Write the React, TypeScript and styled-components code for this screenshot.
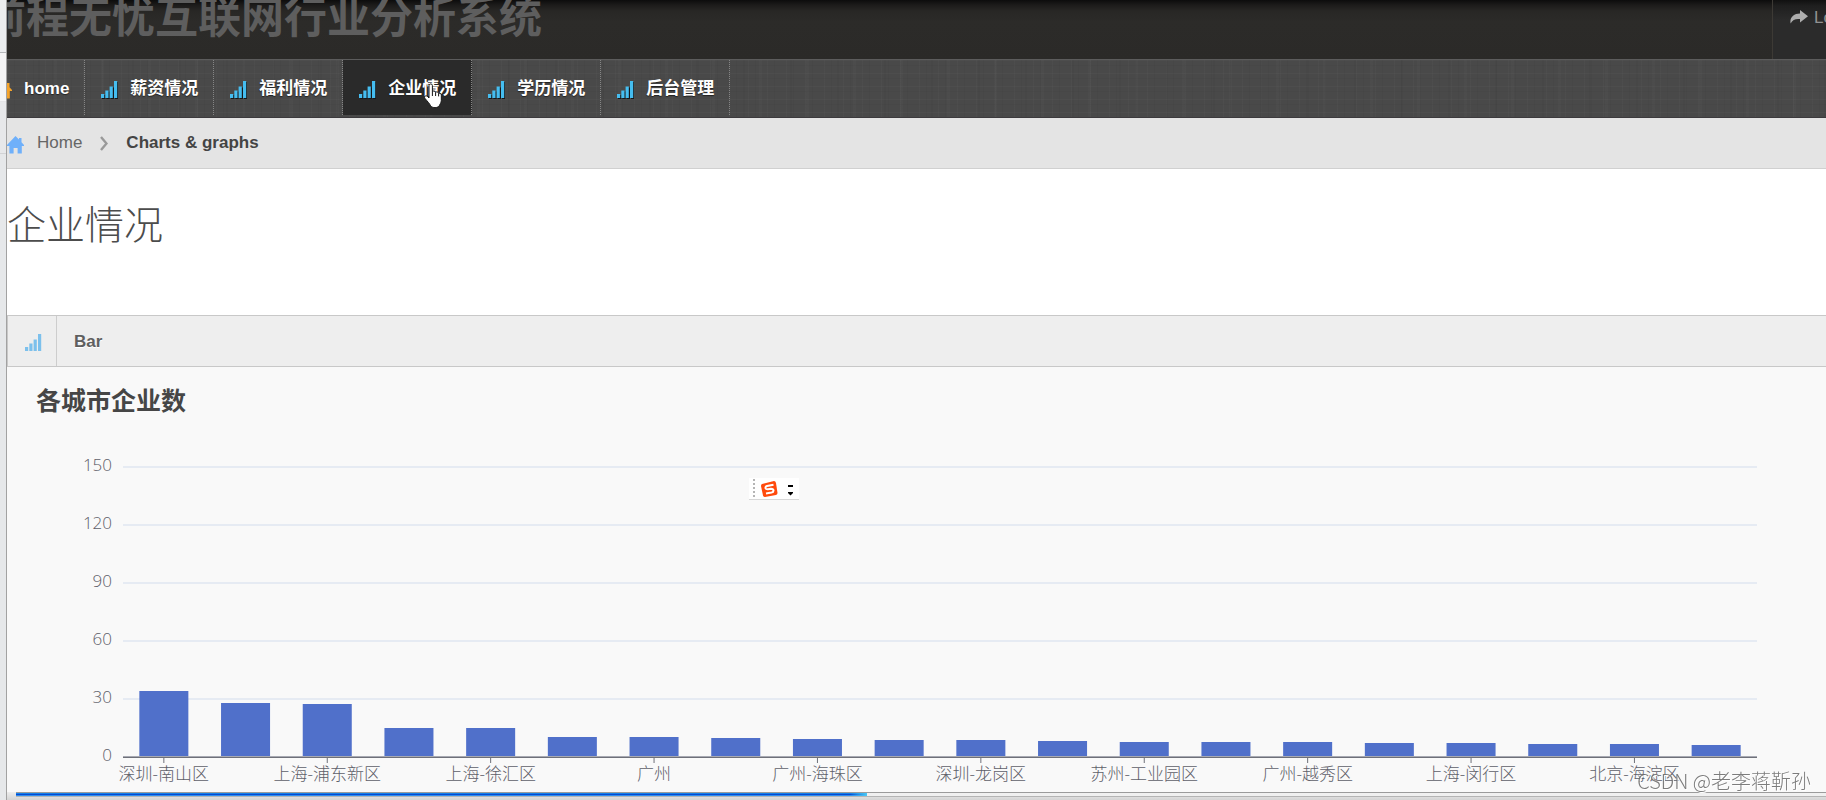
import React from "react";
import styled, { createGlobalStyle } from "styled-components";

const GlobalStyle = createGlobalStyle`
  *, *::before, *::after { box-sizing: border-box; }
  body {
    margin: 0;
    background: #fff;
    font-family: "Liberation Sans", "Noto Sans CJK SC", sans-serif;
    font-size: 17px;
    color: #464646;
  }
  h1, h2, ul, ol { margin: 0; padding: 0; }
  ul, ol { list-style: none; }
  a { color: inherit; text-decoration: none; }
`;

const Page = styled.div`
  display: flex;
  min-height: 100vh;
  overflow: hidden;
`;

const WindowEdge = styled.div`
  flex: 0 0 7px;
  display: flex;
  flex-direction: column;
  background: #e6e8ea;
  border-right: 1px solid #a2a2a2;
`;

const EdgeBlock = styled.div<{ $height: number; $tone: string; $line: string }>`
  height: ${(p) => p.$height}px;
  background: ${(p) => p.$tone};
  border-bottom: 1px solid ${(p) => p.$line};
`;

const Main = styled.div`
  flex: 1;
  min-width: 0;
  display: flex;
  flex-direction: column;
  overflow: hidden;
`;

const Header = styled.header`
  display: flex;
  height: 59px;
  background: linear-gradient(#0c0c0c 0, #1c1b1a 5px, #282725 11px, #2c2b29 22px, #2b2a28 100%);
`;

const SiteTitle = styled.div`
  flex: 1;
  min-width: 0;
  margin-left: -24px;
  line-height: 36px;
  font-size: 43px;
  font-weight: 700;
  white-space: nowrap;
  color: #5e5e5e;
`;

const LogoutLink = styled.a`
  flex: 0 0 54px;
  display: flex;
  gap: 6px;
  padding: 6px 0 0 17px;
  border-left: 1px solid #3d3a35;
  overflow: hidden;
  line-height: 24px;
  color: #929292;
  background: linear-gradient(#101010 0, #1f1f1f 6px, #2b2b2b 20px);

  svg { flex: none; margin-top: 4px; }
`;

const NavBar = styled.nav`
  height: 59px;
  border-top: 1px solid #5c5c5c;
  border-bottom: 1px solid #3c3a3d;
  background:
    repeating-linear-gradient(90deg, rgba(255, 255, 255, 0.02) 0 1px, transparent 1px 7px, rgba(0, 0, 0, 0.03) 7px 8px, transparent 8px 19px),
    repeating-linear-gradient(90deg, rgba(255, 255, 255, 0.015) 0 3px, transparent 3px 31px, rgba(0, 0, 0, 0.03) 31px 33px, transparent 33px 47px),
    repeating-linear-gradient(rgba(255, 255, 255, 0.025) 0 1px, transparent 1px 5px, rgba(0, 0, 0, 0.03) 5px 6px, transparent 6px 13px),
    #494949;
`;

const NavList = styled.ul`
  display: flex;
  height: 55px;
  margin-left: -28px;
`;

const NavItem = styled.li<{ $active?: boolean }>`
  position: relative;
  border-right: 1px dotted #858585;
  background: ${(p) => (p.$active ? "#2a2a2a" : "transparent")};
`;

const NavLink = styled.a`
  display: flex;
  gap: 12px;
  height: 55px;
  padding: 0 15px 0 16px;
  line-height: 57px;
  font-weight: 700;
  white-space: nowrap;
  color: #fff;
  text-shadow: 0 1px 1px #222;

  svg { flex: none; margin-top: 21px; }
`;

const HandPointer = styled.svg`
  position: absolute;
  left: 80px;
  top: 23px;
`;

const Breadcrumb = styled.ol`
  display: flex;
  gap: 18px;
  height: 51px;
  line-height: 50px;
  background: #e4e4e4;
  border-bottom: 1px solid #d0d0d0;
`;

const Crumb = styled.li<{ $current?: boolean }>`
  display: flex;
  font-weight: ${(p) => (p.$current ? 700 : 400)};
  color: ${(p) => (p.$current ? "#444" : "#666")};

  a { display: flex; gap: 13px; }
  svg { flex: none; margin-top: 18px; }
`;

const PageHeading = styled.h1`
  height: 146px;
  padding-top: 28px;
  line-height: 58px;
  font-size: 39px;
  font-weight: 300;
  color: #4c4c4c;
  background: #fff;
`;

const Panel = styled.section`
  flex: 1;
  display: flex;
  flex-direction: column;
  background: #f9f9f9;
`;

const PanelHeader = styled.header`
  display: flex;
  height: 52px;
  border: 1px solid #c8c8c8;
  border-right: 0;
  background: #eee;
  font-weight: 700;
  line-height: 51px;
  color: #5f5f5f;
  text-shadow: 0 1px 0 #fff;
`;

const PanelIcon = styled.span`
  width: 49px;
  padding: 18px 0 0 17px;
  border-right: 1px solid #cdcdcd;
  line-height: 0;
`;

const PanelName = styled.span`
  padding-left: 17px;
`;

const ChartTitle = styled.h2`
  padding: 20px 0 0 29px;
  line-height: 29px;
  font-size: 25px;
  font-weight: 700;
  color: #464646;
`;

const ChartFrame = styled.div`
  display: flex;
  height: 376px;
  padding: 0 69px 0 116px;
`;

const ChartSvg = styled.svg`
  flex: 1;
  min-width: 0;
  height: 376px;
  overflow: visible;
  font-family: "Open Sans", "Noto Sans CJK SC", sans-serif;
  font-size: 17px;
  font-weight: 300;
  fill: #5e6069;
`;

const Player = styled.div`
  height: 8px;
  padding-left: 9px;
  background: linear-gradient(#ededed, #d4d4d4);
`;

const Track = styled.div`
  height: 5px;
  border-top: 1px solid #9b9b9b;
  border-bottom: 1px solid #b4b4b4;
  background: #f0f0f0;
`;

const Played = styled.div`
  width: 47%;
  height: 3px;
  background: linear-gradient(90deg, transparent 98%, #48c8f5 100%),
    linear-gradient(#1480ea 0 1px, #0649d0 1px 2px, #2d8df0 2px);
`;

const InputMethodBar = styled.div`
  position: fixed;
  left: 749px;
  top: 478px;
  display: flex;
  width: 50px;
  height: 22px;
  background: #fff;
  border-bottom: 1px solid #d8d8d8;
`;

const Watermark = styled.div`
  position: fixed;
  right: 15px;
  bottom: 4px;
  font-family: "Noto Sans CJK SC", sans-serif;
  font-size: 20px;
  font-weight: 300;
  line-height: 30px;
  color: rgba(110, 110, 110, 0.9);
  text-shadow: 1px 1px 0 #fff;
`;

const SignalIcon = ({ color, shadow }: { color: string; shadow?: string }) => (
  <svg width="17" height="18" viewBox="0 0 17 18" aria-hidden="true">
    {[[0, 13], [4.3, 9.5], [8.6, 5.5], [13, 0]].map(([x, y]) => (
      <g key={x}>
        {shadow && <rect x={x + 1} y={y + 1} width="3.4" height={17 - y} fill={shadow} />}
        <rect x={x} y={y} width="3.2" height={17 - y} fill={color} />
      </g>
    ))}
  </svg>
);

const HouseIcon = ({ color }: { color: string }) => (
  <svg width="17" height="18" viewBox="0 0 17 18" aria-hidden="true">
    <path d="M8.5 0 L12 3.6 V2 H14.5 V6.3 L17 9 V10 H14.8 V17.5 H10.6 V12 H6.6 V17.5 H2.4 V10 H0 V9 Z" fill={color} />
  </svg>
);

const ChevronIcon = () => (
  <svg width="8" height="15" viewBox="0 0 8 15" aria-hidden="true">
    <path d="M1 1 L6.500 7.500 L1 14" fill="none" stroke="#999" strokeWidth="2.4" />
  </svg>
);

const ShareIcon = () => (
  <svg width="18" height="14" viewBox="0 0 18 14" aria-hidden="true">
    <path d="M10 0 L18 6.2 L10 12.6 V9 C5.5 8.6 2.6 9.6 0.6 13.6 C-0.6 7.6 3.6 3.6 10 3.5 Z" fill="#adadad" />
  </svg>
);

const navItems = ["薪资情况", "福利情况", "企业情况", "学历情况", "后台管理"];
const activeItem = "企业情况";

const PLOT_TOP = 51;
const PLOT_BASE = 341;
const MAX = 150;
const ticks = [150, 120, 90, 60, 30, 0];

const cities: { name: string; count: number }[] = [
  { name: "深圳-南山区", count: 34 },
  { name: "", count: 28 },
  { name: "上海-浦东新区", count: 27.5 },
  { name: "", count: 15 },
  { name: "上海-徐汇区", count: 14.8 },
  { name: "", count: 10.3 },
  { name: "广州", count: 10.3 },
  { name: "", count: 9.8 },
  { name: "广州-海珠区", count: 9.2 },
  { name: "", count: 8.7 },
  { name: "深圳-龙岗区", count: 8.7 },
  { name: "", count: 8.2 },
  { name: "苏州-工业园区", count: 8 },
  { name: "", count: 7.7 },
  { name: "广州-越秀区", count: 7.6 },
  { name: "", count: 7.2 },
  { name: "上海-闵行区", count: 7 },
  { name: "", count: 6.7 },
  { name: "北京-海淀区", count: 6.7 },
  { name: "", count: 6.3 },
];

const yOf = (value: number) => Math.round(PLOT_BASE - (value / MAX) * (PLOT_BASE - PLOT_TOP));
const pct = (position: number) => `${(position / cities.length) * 100}%`;

const CompanyChart = () => (
  <ChartSvg role="img" aria-label="各城市企业数">
    {ticks.map((t) => (
      <g key={t}>
        {t > 0 && <rect x="0" y={yOf(t) - 1} width="100%" height="2" fill="#e6ebf3" />}
        <text x="-11" y={yOf(t) + 4} textAnchor="end">{t}</text>
      </g>
    ))}
    {cities.map((c, i) => (
      <g key={i}>
        <rect x={pct(i + 0.2)} y={yOf(c.count)} width={pct(0.6)} height={PLOT_BASE - yOf(c.count)} fill="#5070ca" />
        {c.name && (
          <>
            <line x1={pct(i + 0.5)} x2={pct(i + 0.5)} y1={PLOT_BASE} y2={PLOT_BASE + 6} stroke="#6e7079" />
            <text x={pct(i + 0.5)} y={PLOT_BASE + 23} textAnchor="middle">{c.name}</text>
          </>
        )}
      </g>
    ))}
    <rect x="0" y={PLOT_BASE - 1} width="100%" height="1" fill="#a7a9b2" />
    <rect x="0" y={PLOT_BASE} width="100%" height="1" fill="#6e7079" />
  </ChartSvg>
);

export default function App() {
  return (
    <>
      <GlobalStyle />
      <Page>
        <WindowEdge>
          <EdgeBlock $height={53} $tone="#ebedef" $line="#b5b7ba" />
          <EdgeBlock $height={49} $tone="#f4f4f5" $line="#e4e4e6" />
          <EdgeBlock $height={52} $tone="#e7e8ea" $line="#d2d3d5" />
        </WindowEdge>
        <Main>
          <Header>
            <SiteTitle>前程无忧互联网行业分析系统</SiteTitle>
            <LogoutLink href="#logout">
              <ShareIcon />
              Logout
            </LogoutLink>
          </Header>
          <NavBar>
            <NavList>
              <NavItem>
                <NavLink href="#home">
                  <HouseIcon color="#f5a32a" />
                  home
                </NavLink>
              </NavItem>
              {navItems.map((label) => (
                <NavItem key={label} $active={label === activeItem}>
                  <NavLink href={`#${label}`}>
                    <SignalIcon color="#45bdf0" shadow="#16181a" />
                    {label}
                  </NavLink>
                  {label === activeItem && (
                    <HandPointer width="20" height="26" viewBox="0 0 20 26" aria-hidden="true">
                      <path
                        d="M6 2.5 C6 0.5 9.4 0.5 9.4 2.5 V8.6 C10 7.6 12.2 7.8 12.6 9.3 C13.6 8.4 15.3 9 15.6 10.3 C16.8 9.8 18.3 10.6 18.3 12.2 V17.5 C18.3 20 16.8 21 16.4 22.5 C14.6 25.3 9.6 25.3 7.6 22.8 C6.6 20.6 4.6 18.6 1.8 15.2 C0.8 13.4 2.8 12 4.4 13.4 L6 15 Z"
                        fill="#fff"
                        stroke="#151515"
                      />
                      <path d="M9.4 8.6 V13 M12.6 9.3 V13 M15.6 10.3 V13.4" fill="none" stroke="#151515" />
                    </HandPointer>
                  )}
                </NavItem>
              ))}
            </NavList>
          </NavBar>
          <Breadcrumb>
            <Crumb>
              <a href="#home">
                <HouseIcon color="#6fb0fa" />
                Home
              </a>
            </Crumb>
            <Crumb aria-hidden="true">
              <ChevronIcon />
            </Crumb>
            <Crumb $current>Charts &amp; graphs</Crumb>
          </Breadcrumb>
          <PageHeading>企业情况</PageHeading>
          <Panel>
            <PanelHeader>
              <PanelIcon>
                <SignalIcon color="#7cc0ec" />
              </PanelIcon>
              <PanelName>Bar</PanelName>
            </PanelHeader>
            <ChartTitle>各城市企业数</ChartTitle>
            <ChartFrame>
              <CompanyChart />
            </ChartFrame>
          </Panel>
          <Player>
            <Track>
              <Played />
            </Track>
          </Player>
        </Main>
        <InputMethodBar>
          <svg width="50" height="21" viewBox="0 0 50 21" aria-hidden="true">
            <path d="M5 1 V21" stroke="#b5b5b5" strokeWidth="2" strokeDasharray="2 2" />
            <path d="M13 6 L25 3 Q26.500 3 27 5 L28.500 15 Q28.500 16.500 27 17 L16 19 Q14.500 19 14 17.500 L12 8 Q12 6.500 13 6 Z" fill="#ff4a0c" />
            <path d="M24.500 6.800 L18 8 Q16 8.600 16.600 10.400 Q17 11.400 19 11.200 L22 10.800 Q24.400 10.800 24.500 12.600 Q24.400 14.200 22.500 14.600 L17 15.600" fill="none" stroke="#fff" strokeWidth="2" />
            <rect x="39" y="7" width="5" height="2" fill="#000" />
            <path d="M39 14 H44 V15 L41.500 17.500 L39 15 Z" fill="#000" />
          </svg>
        </InputMethodBar>
        <Watermark>CSDN @老李蒋靳孙</Watermark>
      </Page>
    </>
  );
}
